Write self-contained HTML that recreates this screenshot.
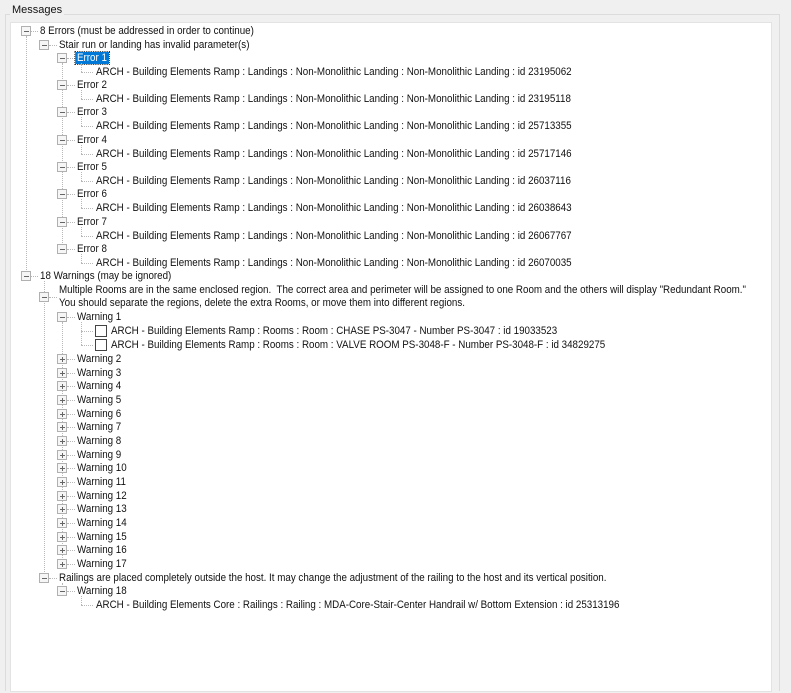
<!DOCTYPE html>
<html><head><meta charset="utf-8"><style>
html,body{margin:0;padding:0}
body{width:791px;height:693px;background:#f0f0f0;position:relative;overflow:hidden;font-family:"Liberation Sans",Arial,sans-serif;font-size:11px;color:#111}
.gb{position:absolute;left:5px;top:14px;width:773px;height:676px;border:1px solid #dcdcdc;border-bottom:none}
.lg{position:absolute;left:10px;top:4px;background:#f0f0f0;padding:0 2px;font-size:11px}
.wh{position:absolute;left:10px;top:22px;width:760px;height:668px;background:#fff;border:1px solid #e3e3e3}
.t{position:absolute;height:14px;line-height:14px;white-space:nowrap;transform:scaleX(0.89);transform-origin:0 50%}
.b{position:absolute;width:8px;height:8px;border:1px solid #b0b0b0;background:#f6f6f6}
.b::before{content:"";position:absolute;left:2px;top:4px;width:5px;height:1px;background:#666}
.p::after{content:"";position:absolute;left:4px;top:2px;width:1px;height:5px;background:#666}
.v{position:absolute;width:0;border-left:1px dotted #b8b8b8}
.h{position:absolute;height:0;border-top:1px dotted #b8b8b8}
.c{position:absolute;width:10px;height:10px;border:1px solid #444;background:#fff}
.sel{background:#0078d7;color:#fff;outline:1px dotted #333;padding:0 2px;margin-left:-2px}
</style></head><body>
<div class="gb"></div>
<div class="lg">Messages</div>
<div class="wh"></div>

<div class="v" style="left:26px;top:36px;height:240px"></div>
<div class="v" style="left:62px;top:63px;height:186px"></div>
<div class="v" style="left:44px;top:281px;height:297px"></div>
<div class="v" style="left:62px;top:322px;height:242px"></div>
<div class="v" style="left:81px;top:322px;height:23px"></div>
<div class="v" style="left:62px;top:583px;height:8px"></div>
<div class="v" style="left:81px;top:596px;height:9px"></div>

<div class="b" style="left:21px;top:26px"></div><div class="h" style="left:31px;top:31px;width:7px"></div>
<div class="t" style="left:40px;top:24px">8 Errors (must be addressed in order to continue)</div>
<div class="b" style="left:39px;top:40px"></div><div class="h" style="left:49px;top:45px;width:8px"></div>
<div class="t" style="left:59px;top:38px">Stair run or landing has invalid parameter(s)</div>

<div class="b" style="left:57px;top:53px"></div><div class="h" style="left:67px;top:58px;width:8px"></div>
<div class="t" style="left:77px;top:51px"><span class="sel">Error 1</span></div>
<div class="v" style="left:81px;top:63px;height:9px"></div><div class="h" style="left:81px;top:72px;width:12px"></div>
<div class="t" style="left:96px;top:65px">ARCH - Building Elements Ramp : Landings : Non-Monolithic Landing : Non-Monolithic Landing : id 23195062</div>

<div class="b" style="left:57px;top:80px"></div><div class="h" style="left:67px;top:85px;width:8px"></div>
<div class="t" style="left:77px;top:78px">Error 2</div>
<div class="v" style="left:81px;top:90px;height:9px"></div><div class="h" style="left:81px;top:99px;width:12px"></div>
<div class="t" style="left:96px;top:92px">ARCH - Building Elements Ramp : Landings : Non-Monolithic Landing : Non-Monolithic Landing : id 23195118</div>

<div class="b" style="left:57px;top:107px"></div><div class="h" style="left:67px;top:112px;width:8px"></div>
<div class="t" style="left:77px;top:105px">Error 3</div>
<div class="v" style="left:81px;top:117px;height:9px"></div><div class="h" style="left:81px;top:126px;width:12px"></div>
<div class="t" style="left:96px;top:119px">ARCH - Building Elements Ramp : Landings : Non-Monolithic Landing : Non-Monolithic Landing : id 25713355</div>

<div class="b" style="left:57px;top:135px"></div><div class="h" style="left:67px;top:140px;width:8px"></div>
<div class="t" style="left:77px;top:133px">Error 4</div>
<div class="v" style="left:81px;top:145px;height:9px"></div><div class="h" style="left:81px;top:154px;width:12px"></div>
<div class="t" style="left:96px;top:147px">ARCH - Building Elements Ramp : Landings : Non-Monolithic Landing : Non-Monolithic Landing : id 25717146</div>

<div class="b" style="left:57px;top:162px"></div><div class="h" style="left:67px;top:167px;width:8px"></div>
<div class="t" style="left:77px;top:160px">Error 5</div>
<div class="v" style="left:81px;top:172px;height:9px"></div><div class="h" style="left:81px;top:181px;width:12px"></div>
<div class="t" style="left:96px;top:174px">ARCH - Building Elements Ramp : Landings : Non-Monolithic Landing : Non-Monolithic Landing : id 26037116</div>

<div class="b" style="left:57px;top:189px"></div><div class="h" style="left:67px;top:194px;width:8px"></div>
<div class="t" style="left:77px;top:187px">Error 6</div>
<div class="v" style="left:81px;top:199px;height:9px"></div><div class="h" style="left:81px;top:208px;width:12px"></div>
<div class="t" style="left:96px;top:201px">ARCH - Building Elements Ramp : Landings : Non-Monolithic Landing : Non-Monolithic Landing : id 26038643</div>

<div class="b" style="left:57px;top:217px"></div><div class="h" style="left:67px;top:222px;width:8px"></div>
<div class="t" style="left:77px;top:215px">Error 7</div>
<div class="v" style="left:81px;top:227px;height:9px"></div><div class="h" style="left:81px;top:236px;width:12px"></div>
<div class="t" style="left:96px;top:229px">ARCH - Building Elements Ramp : Landings : Non-Monolithic Landing : Non-Monolithic Landing : id 26067767</div>

<div class="b" style="left:57px;top:244px"></div><div class="h" style="left:67px;top:249px;width:8px"></div>
<div class="t" style="left:77px;top:242px">Error 8</div>
<div class="v" style="left:81px;top:254px;height:9px"></div><div class="h" style="left:81px;top:263px;width:12px"></div>
<div class="t" style="left:96px;top:256px">ARCH - Building Elements Ramp : Landings : Non-Monolithic Landing : Non-Monolithic Landing : id 26070035</div>

<div class="b" style="left:21px;top:271px"></div><div class="h" style="left:31px;top:276px;width:7px"></div>
<div class="t" style="left:40px;top:269px">18 Warnings (may be ignored)</div>
<div class="b" style="left:39px;top:292px"></div><div class="h" style="left:49px;top:297px;width:8px"></div>
<div class="t" style="left:59px;top:283px">Multiple Rooms are in the same enclosed region.&nbsp; The correct area and perimeter will be assigned to one Room and the others will display "Redundant Room."</div>
<div class="t" style="left:59px;top:296px">You should separate the regions, delete the extra Rooms, or move them into different regions.</div>

<div class="b" style="left:57px;top:312px"></div><div class="h" style="left:67px;top:317px;width:8px"></div>
<div class="t" style="left:77px;top:310px">Warning 1</div>
<div class="h" style="left:81px;top:331px;width:12px"></div><div class="c" style="left:95px;top:325px"></div>
<div class="t" style="left:111px;top:324px">ARCH - Building Elements Ramp : Rooms : Room : CHASE PS-3047 - Number PS-3047 : id 19033523</div>
<div class="h" style="left:81px;top:345px;width:12px"></div><div class="c" style="left:95px;top:339px"></div>
<div class="t" style="left:111px;top:338px">ARCH - Building Elements Ramp : Rooms : Room : VALVE ROOM PS-3048-F - Number PS-3048-F : id 34829275</div>

<div class="b p" style="left:57px;top:354px"></div><div class="h" style="left:67px;top:359px;width:8px"></div><div class="t" style="left:77px;top:352px">Warning 2</div>
<div class="b p" style="left:57px;top:368px"></div><div class="h" style="left:67px;top:373px;width:8px"></div><div class="t" style="left:77px;top:366px">Warning 3</div>
<div class="b p" style="left:57px;top:381px"></div><div class="h" style="left:67px;top:386px;width:8px"></div><div class="t" style="left:77px;top:379px">Warning 4</div>
<div class="b p" style="left:57px;top:395px"></div><div class="h" style="left:67px;top:400px;width:8px"></div><div class="t" style="left:77px;top:393px">Warning 5</div>
<div class="b p" style="left:57px;top:409px"></div><div class="h" style="left:67px;top:414px;width:8px"></div><div class="t" style="left:77px;top:407px">Warning 6</div>
<div class="b p" style="left:57px;top:422px"></div><div class="h" style="left:67px;top:427px;width:8px"></div><div class="t" style="left:77px;top:420px">Warning 7</div>
<div class="b p" style="left:57px;top:436px"></div><div class="h" style="left:67px;top:441px;width:8px"></div><div class="t" style="left:77px;top:434px">Warning 8</div>
<div class="b p" style="left:57px;top:450px"></div><div class="h" style="left:67px;top:455px;width:8px"></div><div class="t" style="left:77px;top:448px">Warning 9</div>
<div class="b p" style="left:57px;top:463px"></div><div class="h" style="left:67px;top:468px;width:8px"></div><div class="t" style="left:77px;top:461px">Warning 10</div>
<div class="b p" style="left:57px;top:477px"></div><div class="h" style="left:67px;top:482px;width:8px"></div><div class="t" style="left:77px;top:475px">Warning 11</div>
<div class="b p" style="left:57px;top:491px"></div><div class="h" style="left:67px;top:496px;width:8px"></div><div class="t" style="left:77px;top:489px">Warning 12</div>
<div class="b p" style="left:57px;top:504px"></div><div class="h" style="left:67px;top:509px;width:8px"></div><div class="t" style="left:77px;top:502px">Warning 13</div>
<div class="b p" style="left:57px;top:518px"></div><div class="h" style="left:67px;top:523px;width:8px"></div><div class="t" style="left:77px;top:516px">Warning 14</div>
<div class="b p" style="left:57px;top:532px"></div><div class="h" style="left:67px;top:537px;width:8px"></div><div class="t" style="left:77px;top:530px">Warning 15</div>
<div class="b p" style="left:57px;top:545px"></div><div class="h" style="left:67px;top:550px;width:8px"></div><div class="t" style="left:77px;top:543px">Warning 16</div>
<div class="b p" style="left:57px;top:559px"></div><div class="h" style="left:67px;top:564px;width:8px"></div><div class="t" style="left:77px;top:557px">Warning 17</div>

<div class="b" style="left:39px;top:573px"></div><div class="h" style="left:49px;top:578px;width:8px"></div>
<div class="t" style="left:59px;top:571px">Railings are placed completely outside the host. It may change the adjustment of the railing to the host and its vertical position.</div>
<div class="b" style="left:57px;top:586px"></div><div class="h" style="left:67px;top:591px;width:8px"></div>
<div class="t" style="left:77px;top:584px">Warning 18</div>
<div class="h" style="left:81px;top:605px;width:12px"></div>
<div class="t" style="left:96px;top:598px">ARCH - Building Elements Core : Railings : Railing : MDA-Core-Stair-Center Handrail w/ Bottom Extension : id 25313196</div>
</body></html>
